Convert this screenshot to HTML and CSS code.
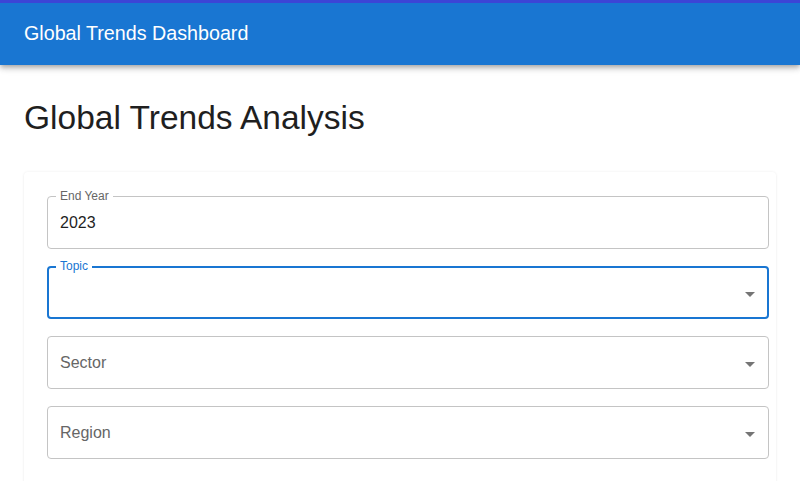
FILE: index.html
```html
<!DOCTYPE html>
<html lang="en">
<head>
<meta charset="utf-8">
<title>Global Trends Dashboard</title>
<link rel="stylesheet" href="styles.css">
</head>
<body>
<header class="appbar">
  <div class="appbar-title">Global Trends Dashboard</div>
</header>
<main class="content">
  <h1 class="page-title">Global Trends Analysis</h1>
  <section class="card">
    <div class="field">
      <fieldset class="outline"><legend>End Year</legend></fieldset>
      <span class="float-label">End Year</span>
      <div class="value">2023</div>
    </div>
    <div class="field focused">
      <fieldset class="outline"><legend>Topic</legend></fieldset>
      <span class="float-label">Topic</span>
      <div class="value"></div>
      <span class="caret"></span>
    </div>
    <div class="field">
      <fieldset class="outline"><legend class="empty"></legend></fieldset>
      <div class="value placeholder">Sector</div>
      <span class="caret"></span>
    </div>
    <div class="field">
      <fieldset class="outline"><legend class="empty"></legend></fieldset>
      <div class="value placeholder">Region</div>
      <span class="caret"></span>
    </div>
  </section>
</main>
</body>
</html>
```

FILE: styles.css
```css
* { box-sizing: border-box; }
html, body { margin: 0; padding: 0; }
body {
  font-family: "Liberation Sans", Arial, sans-serif;
  background: #ffffff;
  color: #1f1f1f;
  overflow: hidden;
  height: 481px;
}
.appbar {
  height: 65px;
  background: #1976d2;
  border-top: 3px solid #3c45d6;
  display: flex;
  align-items: center;
  padding: 0 24px;
  box-shadow: 0 2px 4px -1px rgba(0,0,0,0.2), 0 4px 5px 0 rgba(0,0,0,0.14), 0 1px 10px 0 rgba(0,0,0,0.12);
  position: relative;
  z-index: 2;
}
.appbar-title {
  color: #ffffff;
  font-size: 19.7px;
  line-height: 24px;
  margin-top: -2px;
}
.content {
  padding: 0 24px;
}
.page-title {
  margin: 0;
  padding-top: 33px;
  font-weight: 400;
  font-size: 33.5px;
  line-height: 40px;
  color: #1f1f1f;
  height: 107px;
}
.card {
  background: #fff;
  border-radius: 4px;
  box-shadow: 0 0 3px rgba(0,0,0,0.07), 0 1px 2px rgba(0,0,0,0.04);
  padding: 24px 8px 48px 23px;
  display: flex;
  flex-direction: column;
  gap: 17px;
}
.field {
  position: relative;
  height: 53px;
  display: flex;
  align-items: center;
  padding: 0 13px;
}
.outline {
  position: absolute;
  top: -5px;
  left: 0;
  right: -1px;
  bottom: 0;
  margin: 0;
  padding: 0 8px;
  border: 1px solid #c4c4c4;
  border-radius: 4px;
  pointer-events: none;
  text-align: left;
}
.outline legend {
  font-size: 12px;
  visibility: hidden;
  padding: 0 4px;
  height: 11px;
  line-height: 11px;
}
.outline legend.empty {
  padding: 0;
  width: 0;
}
.float-label {
  position: absolute;
  left: 13px;
  top: -7px;
  font-size: 12px;
  line-height: 14px;
  color: #666;
  padding: 0;
}
.value {
  font-size: 16px;
  color: #1f1f1f;
  margin-top: 1px;
}
.placeholder { color: #666; }
.focused .outline {
  border: 2px solid #1976d2;
  padding: 0 7px;
}
.focused .float-label { color: #1976d2; }
.caret {
  position: absolute;
  right: 13px;
  top: 50%;
  margin-top: -1px;
  width: 0;
  height: 0;
  border-left: 5px solid transparent;
  border-right: 5px solid transparent;
  border-top: 5px solid #757575;
}
```
